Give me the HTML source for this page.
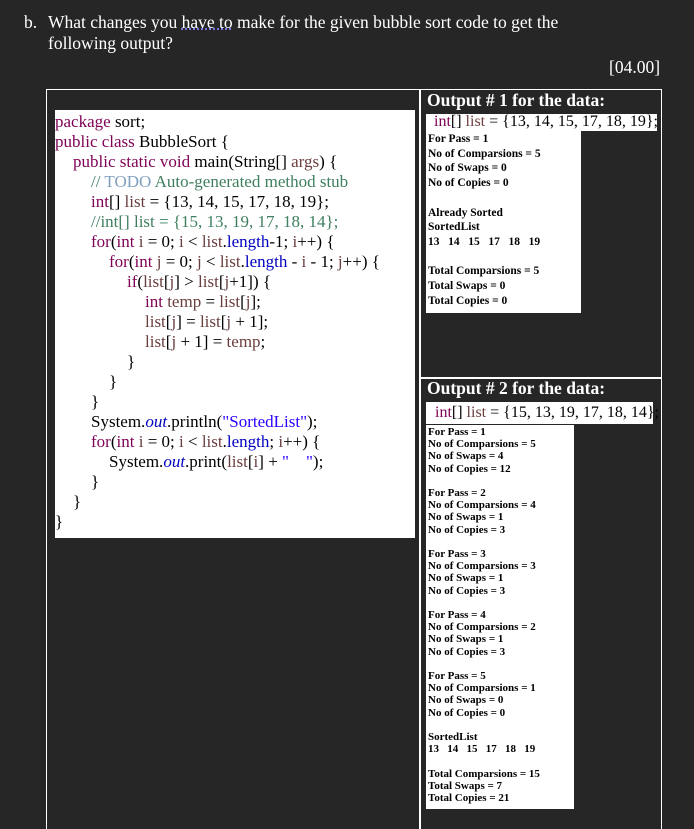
<!DOCTYPE html>
<html><head><meta charset="utf-8"><style>
*{margin:0;padding:0;box-sizing:border-box}
body{width:694px;height:811px;background:#262626;position:relative;overflow:hidden;font-family:"Liberation Serif",serif;color:#fff}
.a{position:absolute;white-space:pre}
.q{font-size:17.5px;line-height:21px}
.code{position:absolute;left:55px;top:110px;width:360px;height:428px;background:#fff;color:#000;font-size:17px}
.code div{position:absolute;white-space:pre;line-height:20px}
.k{color:#7f0055}.v{color:#6a3e3e}.c{color:#3f7f5f}.t{color:#7f9fbf}.b{color:#0000c0}.s{color:#2a00ff}
.o{position:absolute;background:#fff;color:#000;font-weight:bold;font-size:11.5px;white-space:pre}
.h{position:absolute;background:#fff;color:#000;font-size:16px;white-space:pre;line-height:16px}
.t2{font-size:17.5px;font-weight:bold;position:absolute;white-space:pre}
</style></head><body>
<div class="a q" style="left:24px;top:12px">b.</div>
<div class="a q" style="left:48px;top:12px">What changes you <span style="text-decoration:underline dotted #8080ff">have to</span> make for the given bubble sort code to get the</div>
<div class="a q" style="left:48px;top:33px">following output?</div>
<div class="a q" style="left:609px;top:57px">[04.00]</div>

<div style="position:absolute;left:46px;top:89px;width:616px;height:740px;border:1.5px solid #fff;border-bottom:none"></div>
<div style="position:absolute;left:419px;top:89px;width:1.5px;height:740px;background:#fff"></div>
<div style="position:absolute;left:419px;top:377px;width:243px;height:1.5px;background:#fff"></div>

<div class="code">
<div style="left:0;top:2px"><span class="k">package</span> sort;</div>
<div style="left:0;top:22px"><span class="k">public class</span> BubbleSort {</div>
<div style="left:18px;top:42px"><span class="k">public static void</span> main(String[] <span class="v">args</span>) {</div>
<div style="left:36px;top:62px"><span class="c">// <span class="t">TODO</span> Auto-generated method stub</span></div>
<div style="left:36px;top:82px"><span class="k">int</span>[] <span class="v">list</span> = {13, 14, 15, 17, 18, 19};</div>
<div style="left:36px;top:102px"><span class="c">//int[] list = {15, 13, 19, 17, 18, 14};</span></div>
<div style="left:36px;top:122px"><span class="k">for</span>(<span class="k">int</span> <span class="v">i</span> = 0; <span class="v">i</span> &lt; <span class="v">list</span>.<span class="b">length</span>-1; <span class="v">i</span>++) {</div>
<div style="left:54px;top:142px"><span class="k">for</span>(<span class="k">int</span> <span class="v">j</span> = 0; <span class="v">j</span> &lt; <span class="v">list</span>.<span class="b">length</span> - <span class="v">i</span> - 1; <span class="v">j</span>++) {</div>
<div style="left:72px;top:162px"><span class="k">if</span>(<span class="v">list</span>[<span class="v">j</span>] &gt; <span class="v">list</span>[<span class="v">j</span>+1]) {</div>
<div style="left:90px;top:182px"><span class="k">int</span> <span class="v">temp</span> = <span class="v">list</span>[<span class="v">j</span>];</div>
<div style="left:90px;top:202px"><span class="v">list</span>[<span class="v">j</span>] = <span class="v">list</span>[<span class="v">j</span> + 1];</div>
<div style="left:90px;top:222px"><span class="v">list</span>[<span class="v">j</span> + 1] = <span class="v">temp</span>;</div>
<div style="left:72px;top:242px">}</div>
<div style="left:54px;top:262px">}</div>
<div style="left:36px;top:282px">}</div>
<div style="left:36px;top:302px">System.<i class="b">out</i>.println(<span class="s">"SortedList"</span>);</div>
<div style="left:36px;top:322px"><span class="k">for</span>(<span class="k">int</span> <span class="v">i</span> = 0; <span class="v">i</span> &lt; <span class="v">list</span>.<span class="b">length</span>; <span class="v">i</span>++) {</div>
<div style="left:54px;top:342px">System.<i class="b">out</i>.print(<span class="v">list</span>[<span class="v">i</span>] + <span class="s">"    "</span>);</div>
<div style="left:36px;top:362px">}</div>
<div style="left:18px;top:382px">}</div>
<div style="left:0;top:402px">}</div>
</div>

<div class="t2" style="left:427px;top:90px">Output # 1 for the data:</div>
<div class="h" style="left:426px;top:114px;width:231px;height:17px;padding-left:8px"><span class="k">int</span>[] <span class="v">list</span> = {13, 14, 15, 17, 18, 19};</div>
<div class="o" style="left:426px;top:131px;width:155px;height:182px;padding:1px 0 0 2px;line-height:14.7px">For Pass = 1
No of Comparsions = 5
No of Swaps = 0
No of Copies = 0

Already Sorted
SortedList
13   14   15   17   18   19

Total Comparsions = 5
Total Swaps = 0
Total Copies = 0</div>

<div class="t2" style="left:427px;top:378px">Output # 2 for the data:</div>
<div class="h" style="left:426px;top:402px;width:227px;height:22px;padding:3px 0 0 9px"><span class="k">int</span>[] <span class="v">list</span> = {15, 13, 19, 17, 18, 14};</div>
<div class="o" style="left:426px;top:425px;width:148px;height:384px;padding:1px 0 0 2px;line-height:12.2px;font-size:11px">For Pass = 1
No of Comparsions = 5
No of Swaps = 4
No of Copies = 12

For Pass = 2
No of Comparsions = 4
No of Swaps = 1
No of Copies = 3

For Pass = 3
No of Comparsions = 3
No of Swaps = 1
No of Copies = 3

For Pass = 4
No of Comparsions = 2
No of Swaps = 1
No of Copies = 3

For Pass = 5
No of Comparsions = 1
No of Swaps = 0
No of Copies = 0

SortedList
13   14   15   17   18   19

Total Comparsions = 15
Total Swaps = 7
Total Copies = 21</div>
</body></html>
